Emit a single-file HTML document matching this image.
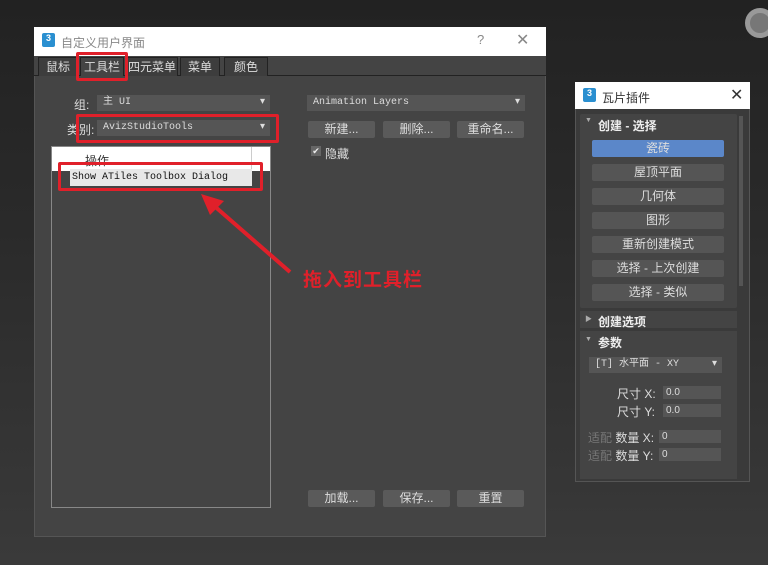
<!DOCTYPE html>
<html><head><meta charset="utf-8"><style>
*{margin:0;padding:0;box-sizing:border-box}
body{width:768px;height:565px;overflow:hidden;background:linear-gradient(#222 0%,#2a2a2a 40%,#3a3a3a 100%);font-family:"Liberation Sans","Noto Sans CJK SC",sans-serif;font-size:12px;color:#ddd;position:relative}
.a{position:absolute}
.btn{position:absolute;background:#5a5a5a;border-radius:2px;color:#ddd;text-align:center;font-size:12px;line-height:17px;height:17px}
.dd{position:absolute;background:#555;height:16px;font-family:"Liberation Mono","Noto Sans CJK SC",monospace;font-size:10px;line-height:16px;padding-left:6px;color:#ddd}
.dd:after{content:"▾";position:absolute;right:5px;top:0;font-size:10px}
.red{position:absolute;border:3px solid #e0202a;border-radius:2px}
.tab{position:absolute;top:57px;height:19px;border:1px solid #222;border-bottom:none;background:#3d3d3d;font-size:12px;line-height:18px;text-align:center;color:#ddd}
.pb{position:absolute;left:592px;width:132px;height:17px;background:#555;border-radius:2px;text-align:center;font-size:12px;line-height:17px;color:#ddd}
.icon{position:absolute;width:13px;height:14px;background:#2a8fd0;border-radius:2px;color:#fff;font-size:9px;font-weight:bold;text-align:center;line-height:11px}
</style></head><body>
<div class="a" style="left:745px;top:8px;width:30px;height:30px;border-radius:50%;border:5px solid #999;background:#777"></div>
<div class="a" style="left:34px;top:27px;width:512px;height:510px;background:#444;border:1px solid #555"></div>
<div class="a" style="left:34px;top:27px;width:512px;height:29px;background:#fff"></div>
<div class="icon" style="left:42px;top:33px">3</div>
<div class="a" style="left:61px;top:34px;color:#888;font-size:12px">自定义用户界面</div>
<div class="a" style="left:477px;top:32px;color:#888;font-size:13px">?</div>
<div class="a" style="left:516px;top:30px;color:#888;font-size:16px">✕</div>
<div class="a" style="left:34px;top:56px;width:512px;height:20px;background:#444;border-bottom:1px solid #222"></div>
<div class="tab" style="left:38px;width:40px">鼠标</div>
<div class="tab" style="left:80px;width:44px;background:#444">工具栏</div>
<div class="tab" style="left:126px;width:52px">四元菜单</div>
<div class="tab" style="left:180px;width:40px">菜单</div>
<div class="tab" style="left:224px;width:44px">颜色</div>
<div class="red" style="left:76px;top:52px;width:52px;height:29px"></div>
<div class="a" style="left:74px;top:96px">组:</div>
<div class="dd" style="left:97px;top:95px;width:173px">主 UI</div>
<div class="a" style="left:67px;top:121px">类别:</div>
<div class="dd" style="left:97px;top:120px;width:173px">AvizStudioTools</div>
<div class="red" style="left:76px;top:114px;width:203px;height:29px"></div>
<div class="a" style="left:51px;top:146px;width:220px;height:362px;border:1px solid #888;background:#444"></div>
<div class="a" style="left:52px;top:147px;width:218px;height:24px;background:#fff"></div>
<div class="a" style="left:251px;top:147px;width:1px;height:24px;background:#ccc"></div>
<div class="a" style="left:85px;top:152px;color:#333">操作</div>
<div class="a" style="left:70px;top:169px;width:182px;height:17px;background:#e8e8e8;color:#111;font-family:'Liberation Mono',monospace;font-size:10px;line-height:17px;padding-left:2px">Show ATiles Toolbox Dialog</div>
<div class="red" style="left:58px;top:162px;width:205px;height:29px"></div>
<div class="dd" style="left:307px;top:95px;width:218px">Animation Layers</div>
<div class="btn" style="left:308px;top:121px;width:67px">新建...</div>
<div class="btn" style="left:383px;top:121px;width:67px">删除...</div>
<div class="btn" style="left:457px;top:121px;width:67px">重命名...</div>
<div class="a" style="left:311px;top:146px;width:10px;height:10px;background:#666;font-size:9px;line-height:10px;text-align:center;color:#eee">✔</div>
<div class="a" style="left:325px;top:145px">隐藏</div>
<div class="btn" style="left:308px;top:490px;width:67px">加载...</div>
<div class="btn" style="left:383px;top:490px;width:67px">保存...</div>
<div class="btn" style="left:457px;top:490px;width:67px">重置</div>
<svg class="a" style="left:0;top:0" width="768" height="565"><line x1="290" y1="272" x2="212" y2="204" stroke="#e0202a" stroke-width="4"/><polygon points="201,194 224,201 210,215" fill="#e0202a"/></svg>
<div class="a" style="left:303px;top:265px;color:#e0202a;font-size:19px;font-weight:bold;letter-spacing:1px">拖入到工具栏</div>
<div class="a" style="left:575px;top:82px;width:175px;height:400px;background:#3a3a3a;border:1px solid #555"></div>
<div class="a" style="left:575px;top:82px;width:175px;height:27px;background:#fff"></div>
<div class="icon" style="left:583px;top:88px">3</div>
<div class="a" style="left:602px;top:89px;color:#333">瓦片插件</div>
<div class="a" style="left:730px;top:85px;color:#333;font-size:16px">✕</div>
<div class="a" style="left:739px;top:116px;width:4px;height:170px;background:#555"></div>
<div class="a" style="left:580px;top:114px;width:157px;height:194px;background:#444;border-radius:2px"></div>
<div class="a" style="left:585px;top:117px;font-size:7px;color:#aaa">▼</div>
<div class="a" style="left:598px;top:117px;font-weight:bold;color:#eee">创建 - 选择</div>
<div class="pb" style="top:140px;background:#5b87c9">瓷砖</div>
<div class="pb" style="top:164px">屋顶平面</div>
<div class="pb" style="top:188px">几何体</div>
<div class="pb" style="top:212px">图形</div>
<div class="pb" style="top:236px">重新创建模式</div>
<div class="pb" style="top:260px">选择 - 上次创建</div>
<div class="pb" style="top:284px">选择 - 类似</div>
<div class="a" style="left:580px;top:311px;width:157px;height:17px;background:#444"></div>
<div class="a" style="left:585px;top:314px;font-size:7px;color:#aaa">▶</div>
<div class="a" style="left:598px;top:313px;font-weight:bold;color:#eee">创建选项</div>
<div class="a" style="left:580px;top:331px;width:157px;height:148px;background:#444"></div>
<div class="a" style="left:585px;top:336px;font-size:7px;color:#aaa">▼</div>
<div class="a" style="left:598px;top:334px;font-weight:bold;color:#eee">参数</div>
<div class="dd" style="left:589px;top:357px;width:133px">[T] 水平面 - XY</div>
<div class="a" style="left:617px;top:385px">尺寸 X:</div>
<div class="a" style="left:663px;top:386px;width:58px;height:13px;background:#555;font-size:10px;line-height:13px;padding-left:3px">0.0</div>
<div class="a" style="left:617px;top:403px">尺寸 Y:</div>
<div class="a" style="left:663px;top:404px;width:58px;height:13px;background:#555;font-size:10px;line-height:13px;padding-left:3px">0.0</div>
<div class="a" style="left:588px;top:429px"><span style="color:#777">适配</span> 数量 X:</div>
<div class="a" style="left:659px;top:430px;width:62px;height:13px;background:#555;font-size:10px;line-height:13px;padding-left:3px">0</div>
<div class="a" style="left:588px;top:447px"><span style="color:#777">适配</span> 数量 Y:</div>
<div class="a" style="left:659px;top:448px;width:62px;height:13px;background:#555;font-size:10px;line-height:13px;padding-left:3px">0</div>
</body></html>
